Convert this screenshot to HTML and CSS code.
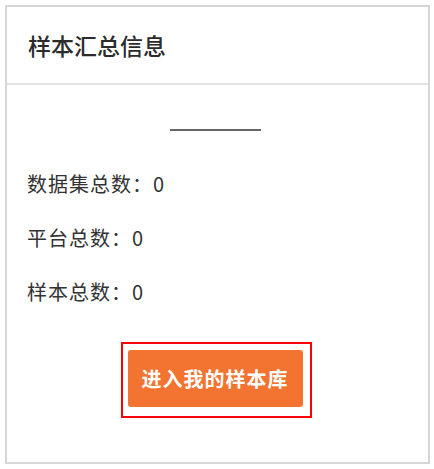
FILE: index.html
```html
<!DOCTYPE html>
<html lang="zh">
<head>
<meta charset="utf-8">
<link rel="stylesheet" href="styles.css">
</head>
<body>
<div class="card">
  <div class="card-header">样本汇总信息</div>
  <div class="card-body">
    <div class="divider"></div>
    <div class="stat">数据集总数：0</div>
    <div class="stat">平台总数：0</div>
    <div class="stat">样本总数：0</div>
    <div class="actions">
      <div class="highlight">
        <button class="btn">进入我的样本库</button>
      </div>
    </div>
  </div>
</div>
</body>
</html>
```
FILE: styles.css
```css
html, body {
  margin: 0;
  padding: 0;
  background: #ffffff;
}
body {
  padding: 5px;
  font-family: "Noto Sans CJK SC", "Noto Sans", sans-serif;
  color: #333333;
}
.card {
  width: 421px;
  height: 455px;
  border: 2px solid #d6d6d6;
  display: flex;
  flex-direction: column;
}
.card-header {
  height: 76px;
  display: flex;
  align-items: center;
  padding-left: 21px;
  font-size: 23px;
  font-weight: 500;
  color: #2b2b2b;
  border-bottom: 2px solid #e3e3e3;
}
.card-body {
  padding: 44px 20px 0 20px;
  display: flex;
  flex-direction: column;
}
.divider {
  align-self: center;
  width: 91px;
  height: 2px;
  background: #666666;
  margin-bottom: 26px;
  margin-right: 5px;
}
.stat {
  height: 54px;
  line-height: 54px;
  font-size: 20px;
  letter-spacing: 1px;
  color: #333333;
}
.actions {
  display: flex;
  justify-content: center;
  padding-top: 23px;
}
.highlight {
  border: 2px solid #ff0000;
  padding: 6px 7px 9px 5px;
  margin-right: 3px;
  display: flex;
}
.btn {
  width: 175px;
  height: 57px;
  background: #f37330;
  color: #ffffff;
  border: none;
  border-radius: 3px;
  font-family: "Noto Sans CJK SC", sans-serif;
  font-size: 20px;
  font-weight: bold;
  letter-spacing: 1px;
  padding: 0;
}
```
